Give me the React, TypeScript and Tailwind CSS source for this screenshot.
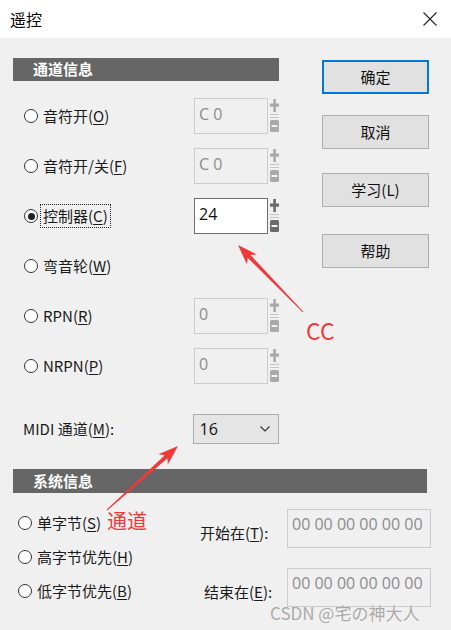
import React from "react"

const rows = [
  { label: "音符开", key: "O", value: "C 0" },
  { label: "音符开/关", key: "F", value: "C 0" },
  { label: "控制器", key: "C", value: "24", active: true },
  { label: "弯音轮", key: "W" },
  { label: "RPN", key: "R", value: "0" },
  { label: "NRPN", key: "P", value: "0" },
]

function Radio({ checked = false }: { checked?: boolean }) {
  return (
    <span className="flex h-[14px] w-[14px] shrink-0 items-center justify-center rounded-full border border-[#333] bg-white">
      {checked && <span className="h-[7px] w-[7px] rounded-full bg-[#222]" />}
    </span>
  )
}

function Label({ text, k, focus = false }: { text: string; k: string; focus?: boolean }) {
  return (
    <span
      className={`border px-[2px] leading-[22px] ${
        focus ? "border-dotted border-[#222]" : "border-transparent"
      }`}
    >
      {text}(<span className="underline underline-offset-2">{k}</span>)
    </span>
  )
}

function Spin({ active = false }: { active?: boolean }) {
  const c = active ? "#6a6a6a" : "#a9a9a9"
  return (
    <svg width="9" height="36" viewBox="0 0 9 36" className="ml-[2px] shrink-0">
      <rect x="3.3" y="1" width="2.6" height="13" fill={c} />
      <rect x="0" y="5.5" width="9" height="3.2" fill={c} />
      <rect x="0" y="16" width="9" height="1" fill="#c4c4c4" />
      <rect x="0" y="19" width="9" height="1" fill="#c4c4c4" />
      <rect x="0" y="22" width="9" height="12" rx="1.5" fill={c} />
      <rect x="1.5" y="27" width="6" height="2" fill="#f4f4f4" />
    </svg>
  )
}

function Btn({ text, primary = false, className = "" }: { text: string; primary?: boolean; className?: string }) {
  return (
    <div
      className={`flex h-[34px] w-[107px] items-center justify-center bg-[#e1e1e1] text-[15px] text-[#111] ${
        primary ? "border-2 border-[#0078d7]" : "border border-[#adadad]"
      } ${className}`}
    >
      {text}
    </div>
  )
}

export default function App() {
  return (
    <div className="relative h-[630px] w-[451px] overflow-hidden bg-[#f0f0f0] text-[15px] text-[#1a1a1a] [font-family:'Noto_Sans_CJK_SC','Microsoft_YaHei',sans-serif]">
      {/* Title bar */}
      <div className="flex h-[38px] items-center justify-between bg-white pl-[10px] pr-[14px]">
        <span className="text-[16px] text-black">遥控</span>
        <svg width="14" height="14" viewBox="0 0 14 14">
          <path d="M0.5 0.5 L13.5 13.5 M13.5 0.5 L0.5 13.5" stroke="#222" strokeWidth="1.1" />
        </svg>
      </div>

      {/* Top part */}
      <div className="flex pl-[13px] pt-[20px]">
        <div className="w-[266px]">
          <div className="flex h-[23px] items-center bg-[#666] pl-[20px] text-[15px] font-bold text-white">
            通道信息
          </div>
          <div className="mt-[17px]">
            {rows.map((r) => (
              <div key={r.key} className="flex h-[50px] items-start pl-[11px]">
                <div className="flex h-[36px] w-[170px] items-center gap-[2px]">
                  <Radio checked={r.active} />
                  <Label text={r.label} k={r.key} focus={r.active} />
                </div>
                {r.value && (
                  <>
                    <div
                      className={`h-[36px] w-[74px] pl-[4px] pt-[2px] text-[16px] leading-[26px] [font-family:'Open_Sans',sans-serif] ${
                        r.active
                          ? "border border-[#6e6e6e] bg-white text-[#111]"
                          : "border border-[#cccccc] bg-[#f0f0f0] text-[#8c8c8c]"
                      }`}
                    >
                      {r.value}
                    </div>
                    <Spin active={r.active} />
                  </>
                )}
              </div>
            ))}
          </div>
          <div className="mt-[16px] flex items-center pl-[10px]">
            <span className="w-[171px]">
              MIDI 通道(<span className="underline underline-offset-2">M</span>):
            </span>
            <div className="flex h-[30px] w-[87px] items-center justify-between border border-[#adadad] bg-[#e5e5e5] pl-[6px] pr-[8px]">
              <span className="text-[16px] text-[#111] [font-family:'Open_Sans',sans-serif]">16</span>
              <svg width="10" height="6" viewBox="0 0 10 6">
                <path d="M0.5 0.5 L5 5 L9.5 0.5" fill="none" stroke="#333" strokeWidth="1.1" />
              </svg>
            </div>
          </div>
        </div>

        <div className="ml-[43px] pt-[2px]">
          <Btn text="确定" primary />
          <Btn text="取消" className="mt-[21px]" />
          <Btn text="学习(L)" className="mt-[24px]" />
          <Btn text="帮助" className="mt-[27px]" />
        </div>
      </div>

      {/* System info */}
      <div className="ml-[13px] mt-[25px] flex h-[24px] w-[414px] items-center bg-[#666] pl-[20px] text-[15px] font-bold text-white">
        系统信息
      </div>
      <div className="flex pl-[18px]">
        <div className="mt-[13px] w-[182px]">
          {[
            ["单字节", "S"],
            ["高字节优先", "H"],
            ["低字节优先", "B"],
          ].map(([t, k]) => (
            <div key={k} className="flex h-[34px] items-center gap-[2px]">
              <Radio />
              <Label text={t} k={k} />
            </div>
          ))}
        </div>
        <div className="mt-[16px]">
          {[
            ["开始在", "T", ""],
            ["结束在", "E", "pl-[4px] mt-[20px]"],
          ].map(([t, k, extra]) => (
            <div key={k} className={`flex ${extra}`}>
              <span className={`self-end pb-[4px] ${k === "T" ? "w-[87px]" : "w-[83px]"}`}>
                {t}(<span className="underline underline-offset-2">{k}</span>):
              </span>
              <div className="h-[39px] w-[144px] overflow-hidden whitespace-nowrap border border-[#cccccc] bg-[#f0f0f0] pl-[4px] pt-[2px] text-[16px] text-[#8c8c8c] [font-family:'Open_Sans',sans-serif]">
                00 00 00 00 00 00
              </div>
            </div>
          ))}
        </div>
      </div>

      {/* Annotations */}
      <svg className="pointer-events-none absolute left-0 top-0" width="451" height="630" viewBox="0 0 451 630">
        <polygon
          points="238,245 256.9,254.5 250.6,255.1 303.4,311.7 302.6,312.3 247.8,257.9 246.9,264.3"
          fill="#f03a3a"
        />
        <polygon
          points="178,446 167.8,464.6 167.4,458.2 107.3,510.4 106.7,509.6 164.8,455.2 158.4,454.2"
          fill="#f03a3a"
        />
      </svg>
      <span className="absolute left-[306px] top-[315px] text-[23px] leading-[30px] text-[#f03a3a]">CC</span>
      <span className="absolute left-[107px] top-[507px] text-[20px] leading-[28px] text-[#f03a3a]">通道</span>
      <span className="absolute left-[270px] top-[600px] text-[17px] leading-[26px] text-[#a8a8a8] [text-shadow:0_0_1px_#fff]">
        CSDN @宅の神大人
      </span>
    </div>
  )
}
